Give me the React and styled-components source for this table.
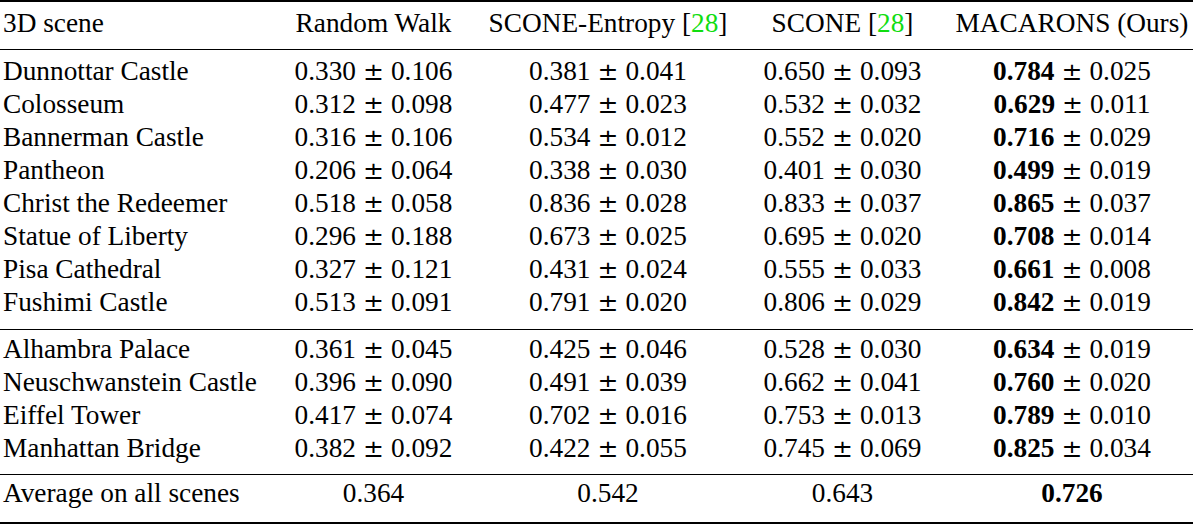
import React from 'react';
import styled, { createGlobalStyle } from 'styled-components';

const Global = createGlobalStyle`
  html, body { margin: 0; padding: 0; background: #fff; }
  body { font-family: "Liberation Serif", "Times New Roman", serif; color: #000; }
`;

const Table = styled.div`
  width: 1193px;
  border-top: 2px solid #000;
  border-bottom: 2px solid #000;
  font-size: 27.3px;
  line-height: 33px;
`;

const Section = styled.div`
  padding-top: ${p => p.$pt}px;
  padding-bottom: ${p => p.$pb}px;
  border-bottom: ${p => (p.$rule ? '1px solid #000' : 'none')};
`;

const Row = styled.div`
  display: grid;
  grid-template-columns: 276px 195px 274px 195px 253px;
  height: 33px;
`;

const Cell = styled.div`
  white-space: nowrap;
  text-align: center;
  &:first-child { text-align: left; padding-left: 3px; }
  &:last-child { padding-left: 14px; padding-right: 3px; }
`;

const Num = styled.span`
  font-weight: ${p => (p.$bold ? 700 : 400)};
`;

const Pm = styled.span`
  font-family: "DejaVu Serif", "Liberation Serif", serif;
  font-size: 25px;
  margin: 0 7px;
`;

const Ref = styled.span`
  color: #11dd11;
`;

const Cite = ({ n }) => (
  <>
    [<Ref>{n}</Ref>]
  </>
);

const Value = ({ m, s, bold }) => (
  <>
    <Num $bold={bold}>{m}</Num>
    <Pm>±</Pm>
    <Num>{s}</Num>
  </>
);

const rows1 = [
  ['Dunnottar Castle', '0.330', '0.106', '0.381', '0.041', '0.650', '0.093', '0.784', '0.025'],
  ['Colosseum', '0.312', '0.098', '0.477', '0.023', '0.532', '0.032', '0.629', '0.011'],
  ['Bannerman Castle', '0.316', '0.106', '0.534', '0.012', '0.552', '0.020', '0.716', '0.029'],
  ['Pantheon', '0.206', '0.064', '0.338', '0.030', '0.401', '0.030', '0.499', '0.019'],
  ['Christ the Redeemer', '0.518', '0.058', '0.836', '0.028', '0.833', '0.037', '0.865', '0.037'],
  ['Statue of Liberty', '0.296', '0.188', '0.673', '0.025', '0.695', '0.020', '0.708', '0.014'],
  ['Pisa Cathedral', '0.327', '0.121', '0.431', '0.024', '0.555', '0.033', '0.661', '0.008'],
  ['Fushimi Castle', '0.513', '0.091', '0.791', '0.020', '0.806', '0.029', '0.842', '0.019'],
];

const rows2 = [
  ['Alhambra Palace', '0.361', '0.045', '0.425', '0.046', '0.528', '0.030', '0.634', '0.019'],
  ['Neuschwanstein Castle', '0.396', '0.090', '0.491', '0.039', '0.662', '0.041', '0.760', '0.020'],
  ['Eiffel Tower', '0.417', '0.074', '0.702', '0.016', '0.753', '0.013', '0.789', '0.010'],
  ['Manhattan Bridge', '0.382', '0.092', '0.422', '0.055', '0.745', '0.069', '0.825', '0.034'],
];

const DataRow = ({ r }) => (
  <Row>
    <Cell>{r[0]}</Cell>
    <Cell><Value m={r[1]} s={r[2]} /></Cell>
    <Cell><Value m={r[3]} s={r[4]} /></Cell>
    <Cell><Value m={r[5]} s={r[6]} /></Cell>
    <Cell><Value m={r[7]} s={r[8]} bold /></Cell>
  </Row>
);

export default function App() {
  return (
    <>
      <Global />
      <Table>
        <Section $pt={5.3} $pb={8.7} $rule>
          <Row>
            <Cell>3D scene</Cell>
            <Cell>Random Walk</Cell>
            <Cell>SCONE-Entropy <Cite n="28" /></Cell>
            <Cell>SCONE <Cite n="28" /></Cell>
            <Cell>MACARONS (Ours)</Cell>
          </Row>
        </Section>
        <Section $pt={5.3} $pb={9.7} $rule>
          {rows1.map(r => <DataRow key={r[0]} r={r} />)}
        </Section>
        <Section $pt={3.3} $pb={8.7} $rule>
          {rows2.map(r => <DataRow key={r[0]} r={r} />)}
        </Section>
        <Section $pt={2.3} $pb={11.7}>
          <Row>
            <Cell>Average on all scenes</Cell>
            <Cell>0.364</Cell>
            <Cell>0.542</Cell>
            <Cell>0.643</Cell>
            <Cell><Num $bold>0.726</Num></Cell>
          </Row>
        </Section>
      </Table>
    </>
  );
}
